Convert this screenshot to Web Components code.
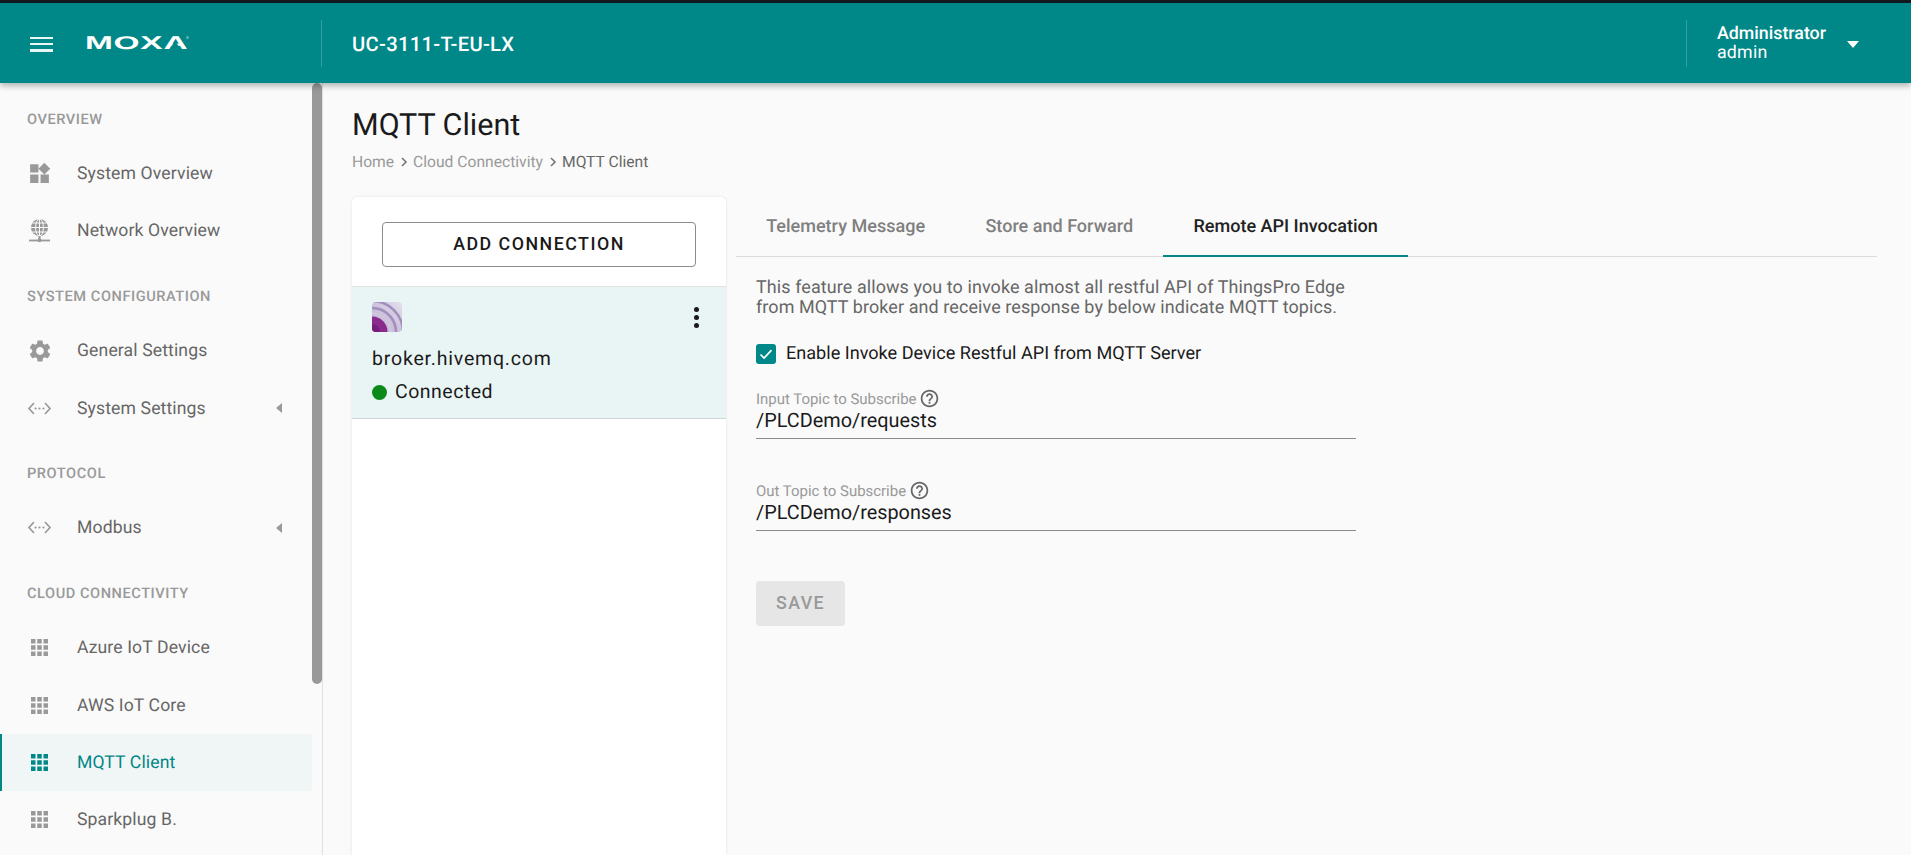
<!DOCTYPE html>
<html lang="en"><head><meta charset="utf-8"><title>MQTT Client</title>
<style>
html,body{margin:0;padding:0;height:100%;overflow:hidden;background:#fafafa;font-family:Roboto,"Liberation Sans",sans-serif;text-rendering:geometricPrecision}
</style></head>
<body>
<moxa-app>
  <moxa-header slot="header" device="UC-3111-T-EU-LX" role-name="Administrator" user="admin"></moxa-header>
  <side-nav slot="nav">
    <nav-section label="OVERVIEW">
      <nav-item icon="widgets">System Overview</nav-item>
      <nav-item icon="globe">Network Overview</nav-item>
    </nav-section>
    <nav-section label="SYSTEM CONFIGURATION">
      <nav-item icon="gear">General Settings</nav-item>
      <nav-item icon="proto" arrow>System Settings</nav-item>
    </nav-section>
    <nav-section label="PROTOCOL">
      <nav-item icon="proto" arrow>Modbus</nav-item>
    </nav-section>
    <nav-section label="CLOUD CONNECTIVITY">
      <nav-item icon="apps">Azure IoT Device</nav-item>
      <nav-item icon="apps">AWS IoT Core</nav-item>
      <nav-item icon="apps" active>MQTT Client</nav-item>
      <nav-item icon="apps">Sparkplug B.</nav-item>
    </nav-section>
  </side-nav>
  <page-head slot="main"></page-head>
  <div slot="main" style="display:flex;flex:1;min-height:0">
    <conn-list></conn-list>
    <remote-panel style="flex:1"></remote-panel>
  </div>
</moxa-app>
<script>
const tpl = (c, css, html) => { const r = c.attachShadow({mode:'open'}); r.innerHTML = `<style>${css}</style>${html}`; return r; };
const ICONS = {
  widgets:`<svg width="25" height="25" viewBox="0 0 24 24" fill="#999"><path d="M13 13v8h8v-8h-8zM3 21h8v-8H3v8zM3 3v8h8V3H3zm13.66-1.31L11 7.34 16.66 13l5.66-5.66-5.66-5.65z"/></svg>`,
  globe:`<svg width="25" height="25" viewBox="0 0 25 25" fill="none" stroke="#999" stroke-width="1.3"><circle cx="12.5" cy="9.5" r="8.6" fill="#999" stroke="none"/><g stroke="#fafafa" stroke-width="1"><ellipse cx="12.5" cy="9.5" rx="3.9" ry="8.6"/><path d="M3.9 9.5h17.2M5.2 5h14.6M5.2 14h14.6M12.5 1v17"/></g><path d="M12.5 18v4" stroke-width="2.2"/><path d="M2 22.5h21" stroke-width="1.8"/><circle cx="12.5" cy="22.3" r="2" fill="#999" stroke="none"/></svg>`,
  gear:`<svg width="26" height="26" viewBox="0 0 24 24" fill="#999"><path d="M19.14 12.94c.04-.3.06-.61.06-.94 0-.32-.02-.64-.07-.94l2.03-1.58c.18-.14.23-.41.12-.61l-1.92-3.32c-.12-.22-.37-.29-.59-.22l-2.39.96c-.5-.38-1.03-.7-1.62-.94l-.36-2.54c-.04-.24-.24-.41-.48-.41h-3.84c-.24 0-.43.17-.47.41l-.36 2.54c-.59.24-1.13.57-1.62.94l-2.39-.96c-.22-.08-.47 0-.59.22L2.74 8.87c-.12.21-.08.47.12.61l2.03 1.58c-.05.3-.09.63-.09.94s.02.64.07.94l-2.03 1.58c-.18.14-.23.41-.12.61l1.92 3.32c.12.22.37.29.59.22l2.39-.96c.5.38 1.03.7 1.62.94l.36 2.54c.05.24.24.41.48.41h3.84c.24 0 .44-.17.47-.41l.36-2.54c.59-.24 1.13-.56 1.62-.94l2.39.96c.22.08.47 0 .59-.22l1.92-3.32c.12-.22.07-.47-.12-.61l-2.01-1.58zM12 15.6c-1.98 0-3.6-1.62-3.6-3.6s1.62-3.6 3.6-3.6 3.6 1.62 3.6 3.6-1.62 3.6-3.6 3.6z"/></svg>`,
  proto:`<svg width="25" height="25" viewBox="0 0 25 25" fill="none" stroke="#999" stroke-width="1.7"><path d="M7 7L2 12.5 7 18M18 7L23 12.5 18 18"/><g fill="#999" stroke="none"><circle cx="8.6" cy="12.5" r="1.1"/><circle cx="12.5" cy="12.5" r="1.1"/><circle cx="16.4" cy="12.5" r="1.1"/></g></svg>`
};
const apps = c => { let s=''; for(let y=0;y<3;y++)for(let x=0;x<3;x++) s+=`<rect x="${4+x*6.25}" y="${4+y*6.25}" width="4.5" height="4.5"/>`; return `<svg width="25" height="25" viewBox="0 0 25 25" fill="${c}">${s}</svg>`; };
const HELP = `<svg width="21" height="21" viewBox="0 0 24 24" fill="#666" style="display:block"><path d="M11 18h2v-2h-2v2zm1-16C6.48 2 2 6.48 2 12s4.48 10 10 10 10-4.48 10-10S17.52 2 12 2zm0 18c-4.41 0-8-3.59-8-8s3.59-8 8-8 8 3.59 8 8-3.59 8-8 8zm0-14c-2.21 0-4 1.79-4 4h2c0-1.1.9-2 2-2s2 .9 2 2c0 2-3 1.75-3 5h2c0-2.25 3-2.5 3-5 0-2.21-1.79-4-4-4z"/></svg>`;

customElements.define('moxa-app', class extends HTMLElement{ constructor(){super();tpl(this,`
  :host{display:grid;grid-template-rows:83px 1fr;grid-template-columns:323px 1fr;height:855px;width:1911px;overflow:hidden;background:#fafafa;color:#1a1a1a}
  .h{grid-column:1/3;position:relative;z-index:2}
  .n{min-height:0;overflow:hidden}
  .m{min-height:0;overflow:hidden;display:flex;flex-direction:column;padding:0 34px 0 29px}
`,`<div class="h"><slot name="header"></slot></div><div class="n"><slot name="nav"></slot></div><div class="m"><slot name="main"></slot></div>`);}});

customElements.define('moxa-logo', class extends HTMLElement{ constructor(){super();tpl(this,`
  :host{display:block;position:relative;width:105px;height:14px;color:#fff}
  .t{position:absolute;left:0;top:-3px;font:700 18.4px/20px "Liberation Sans",sans-serif;letter-spacing:.4px;transform:scaleX(1.82);transform-origin:0 0;white-space:nowrap}
  .bar{position:absolute;left:84.5px;top:4.5px;width:12px;height:10px;background:#008787;clip-path:polygon(50% 0,100% 100%,0 100%)}
  .reg{position:absolute;left:101px;top:0;width:3px;height:3px;border-radius:50%;background:rgba(255,255,255,.35)}
`,`<span class="t">MOXA</span><span class="bar"></span><span class="reg"></span>`);}});

customElements.define('moxa-header', class extends HTMLElement{ constructor(){super();tpl(this,`
  :host{display:flex;align-items:center;height:83px;box-sizing:border-box;background:#008787;border-top:3px solid #13181d;color:#fff;box-shadow:0 3px 6px rgba(0,0,0,.28)}
  .menu{width:22.5px;height:15px;margin:2px 0 0 30px;display:flex;flex-direction:column;justify-content:space-between}
  .menu i{display:block;height:2.2px;background:#e8f6f6}
  moxa-logo{margin-left:32px}
  .div{width:1px;height:47px;background:rgba(255,255,255,.2)}
  .d1{margin-left:131.5px}
  .dev{margin:1px 0 0 30px;font:500 20.2px/24px Roboto,sans-serif;letter-spacing:.3px;flex:1}
  .u{margin-left:30px;font:500 17.8px/19px Roboto,sans-serif;width:112px}
  .u div+div{font-weight:400;letter-spacing:.2px}
  .car{width:0;height:0;border:6.5px solid transparent;border-top:7px solid #fff;border-bottom:0;margin:0 52px 0 18px;transform:translateY(1px)}
`,`<div class="menu"><i></i><i></i><i></i></div><moxa-logo></moxa-logo><div class="div d1"></div>
<div class="dev">${this.getAttribute('device')}</div><div class="div"></div>
<div class="u"><div>${this.getAttribute('role-name')}</div><div>${this.getAttribute('user')}</div></div><div class="car"></div>`);}});

customElements.define('side-nav', class extends HTMLElement{ constructor(){super();tpl(this,`
  :host{display:block;position:relative;height:100%;box-sizing:border-box;padding-top:10px;border-right:1px solid #e0e0e0;background:#fafafa}
  .list{width:312px}
  .thumb{position:absolute;right:0;top:0;width:10px;height:601px;background:#999;border-radius:5px}
`,`<div class="list"><slot></slot></div><div class="thumb"></div>`);}});

customElements.define('nav-section', class extends HTMLElement{ constructor(){super();tpl(this,`
  :host{display:block;margin-bottom:10.5px}
  .l{height:52px;padding-left:27px;font:500 14.6px/52px Roboto,sans-serif;letter-spacing:.55px;color:#999}
`,`<div class="l">${this.getAttribute('label')}</div><slot></slot>`);}});

customElements.define('nav-item', class extends HTMLElement{ constructor(){super();
  const act=this.hasAttribute('active'), ic=this.getAttribute('icon');
  tpl(this,`
  :host{display:flex;align-items:center;height:57.33px;box-sizing:border-box;padding-left:27px;font:400 17.6px/24px Roboto,sans-serif;color:#666;position:relative}
  :host([active]){background:#f0f6f6;color:#008787;box-shadow:inset 2px 0 0 #008787}
  .i{width:25px;height:25px;flex:none;display:flex;align-items:center;justify-content:center;margin-right:25px}
  .i svg{display:block;flex:none}
  .t{flex:1;letter-spacing:.12px;margin-top:1px}
  .a{width:0;height:0;border:5.5px solid transparent;border-right:6px solid #999;border-left:0;margin-right:30px}
`,`<span class="i">${ic==='apps'?apps(act?'#008787':'#999'):ICONS[ic]}</span><span class="t"><slot></slot></span>${this.hasAttribute('arrow')?'<span class="a"></span>':''}`);}});

customElements.define('page-head', class extends HTMLElement{ constructor(){super();tpl(this,`
  :host{display:block;height:114px;box-sizing:border-box;padding-top:23.5px}
  h1{margin:0;font:400 30.5px/38px Roboto,sans-serif;color:#1a1a1a}
  nav{margin-top:7.5px;display:flex;align-items:center;font:400 15.65px/20px Roboto,sans-serif;color:#999}
  nav b{font-weight:400;color:#666}
  svg{margin:0 5.5px;display:block}
`,`<h1>MQTT Client</h1><nav>Home<svg width="8" height="12" viewBox="0 0 8 12" fill="none" stroke="#777" stroke-width="1.6"><path d="M2 2l4 4-4 4"/></svg>Cloud Connectivity<svg width="8" height="12" viewBox="0 0 8 12" fill="none" stroke="#777" stroke-width="1.6"><path d="M2 2l4 4-4 4"/></svg><b>MQTT Client</b></nav>`);}});

customElements.define('hive-icon', class extends HTMLElement{ constructor(){super();tpl(this,`:host{display:block;width:30px;height:30px}svg{display:block}`,
`<svg width="30" height="30" viewBox="0 0 30 30"><defs><linearGradient id="g" x1="1" y1="0" x2="0" y2="1"><stop offset="0" stop-color="#e4dfec"/><stop offset="1" stop-color="#b9a8cf"/></linearGradient><clipPath id="c"><rect width="30" height="30" rx="4"/></clipPath></defs><g clip-path="url(#c)"><rect width="30" height="30" fill="url(#g)"/><g fill="none" stroke="#a18fbd" stroke-width="2.6"><circle cx="0" cy="30" r="24"/><circle cx="0" cy="30" r="31"/><circle cx="0" cy="30" r="18.5" stroke="#cfc6dd"/></g><circle cx="0" cy="30" r="15.5" fill="#8a2a8c"/><circle cx="0" cy="30" r="8" fill="#751d7c"/></g></svg>`);}});

customElements.define('conn-list', class extends HTMLElement{ constructor(){super();tpl(this,`
  :host{display:block;width:374px;flex:none;background:#fff;border-radius:5px 5px 0 0;box-shadow:0 0 3px rgba(0,0,0,.1)}
  .top{height:90px;box-sizing:border-box;padding:25px 30px 0;border-bottom:1px solid #dfe3e3}
  button{display:block;width:100%;height:45px;box-sizing:border-box;background:#fff;border:1px solid #8c8c8c;border-radius:4px;font:500 17.8px/1 Roboto,sans-serif;letter-spacing:1.5px;color:#1a1a1a;padding:0 0 2px}
  .it{height:132px;box-sizing:border-box;background:#e9f5f5;border-bottom:1px solid #cfd8d8;padding:15px 20px 0;position:relative}
  .n{margin-top:14px;font:400 19.5px/26px Roboto,sans-serif;letter-spacing:.8px;color:#1a1a1a}
  .s{margin-top:7px;display:flex;align-items:center;font:400 19.5px/26px Roboto,sans-serif;letter-spacing:.5px;color:#1a1a1a}
  .dot{width:15px;height:15px;border-radius:50%;background:#0b8a1c;margin-right:8px}
  .more{position:absolute;right:27px;top:20px;display:flex;flex-direction:column;gap:3px}
  .more i{display:block;width:5px;height:5px;border-radius:50%;background:#1a1a1a}
`,`<div class="top"><button>ADD CONNECTION</button></div>
<div class="it"><hive-icon></hive-icon><div class="more"><i></i><i></i><i></i></div><div class="n">broker.hivemq.com</div><div class="s"><span class="dot"></span>Connected</div></div>`);}});

customElements.define('text-field', class extends HTMLElement{ constructor(){super();tpl(this,`
  :host{display:block;width:600px;box-sizing:border-box;border-bottom:1px solid #8a8a8a}
  .l{display:flex;align-items:center;gap:3px;height:20.5px;font:400 14.95px/20.5px Roboto,sans-serif;color:#999}
  .v{font:400 19.85px/23px Roboto,sans-serif;color:#1a1a1a;padding:0 0 5.5px}
`,`<div class="l">${this.getAttribute('label')}${HELP}</div><div class="v">${this.getAttribute('value')}</div>`);}});

customElements.define('tab-bar', class extends HTMLElement{ constructor(){super();tpl(this,`
  :host{display:flex;height:61px;box-sizing:border-box;border-bottom:1px solid #dcdcdc;margin-top:-1px}
  div{padding:0 30.2px;height:60px;font:500 18.05px/62.5px Roboto,sans-serif;color:#808080;box-sizing:border-box;position:relative}
  div:first-child{margin-left:-1px}
  div.on{color:#222}
  div.on::after{content:"";position:absolute;left:0;right:0;bottom:-1px;height:2px;background:#008787}
`,`<div>Telemetry Message</div><div>Store and Forward</div><div class="on">Remote API Invocation</div>`);}});

customElements.define('remote-panel', class extends HTMLElement{ constructor(){super();tpl(this,`
  :host{display:block;padding-left:10px}
  .b{padding:21px 0 0 20px}
  p{margin:0;font:400 17.95px/20px Roboto,sans-serif;letter-spacing:.1px;color:#666}
  .chk{margin-top:20.5px;display:flex;align-items:center;gap:10px;height:30px;font:400 18.1px/30px Roboto,sans-serif;color:#1a1a1a}
  .box{width:20px;height:20px;border-radius:3px;background:#008787;display:flex;align-items:center;justify-content:center}
  text-field{margin-top:20px}
  text-field+text-field{margin-top:42px}
  .save{display:block;margin-top:50px;width:89px;height:45px;background:#e6e6e6;border:0;border-radius:4px;font:500 17.8px/1 Roboto,sans-serif;letter-spacing:1.4px;color:#999;padding:0 0 1px}
`,`<tab-bar></tab-bar><div class="b"><p>This feature allows you to invoke almost all restful API of ThingsPro Edge<br>from MQTT broker and receive response by below indicate MQTT topics.</p>
<div class="chk"><span class="box"><svg width="16" height="16" viewBox="0 0 16 16" fill="none" stroke="#fff" stroke-width="1.7"><path d="M2.5 8.5l3.6 3.6 7.4-8"/></svg></span>Enable Invoke Device Restful API from MQTT Server</div>
<text-field label="Input Topic to Subscribe" value="/PLCDemo/requests"></text-field>
<text-field label="Out Topic to Subscribe" value="/PLCDemo/responses"></text-field>
<button class="save">SAVE</button></div>`);}});
</script>
</body></html>
